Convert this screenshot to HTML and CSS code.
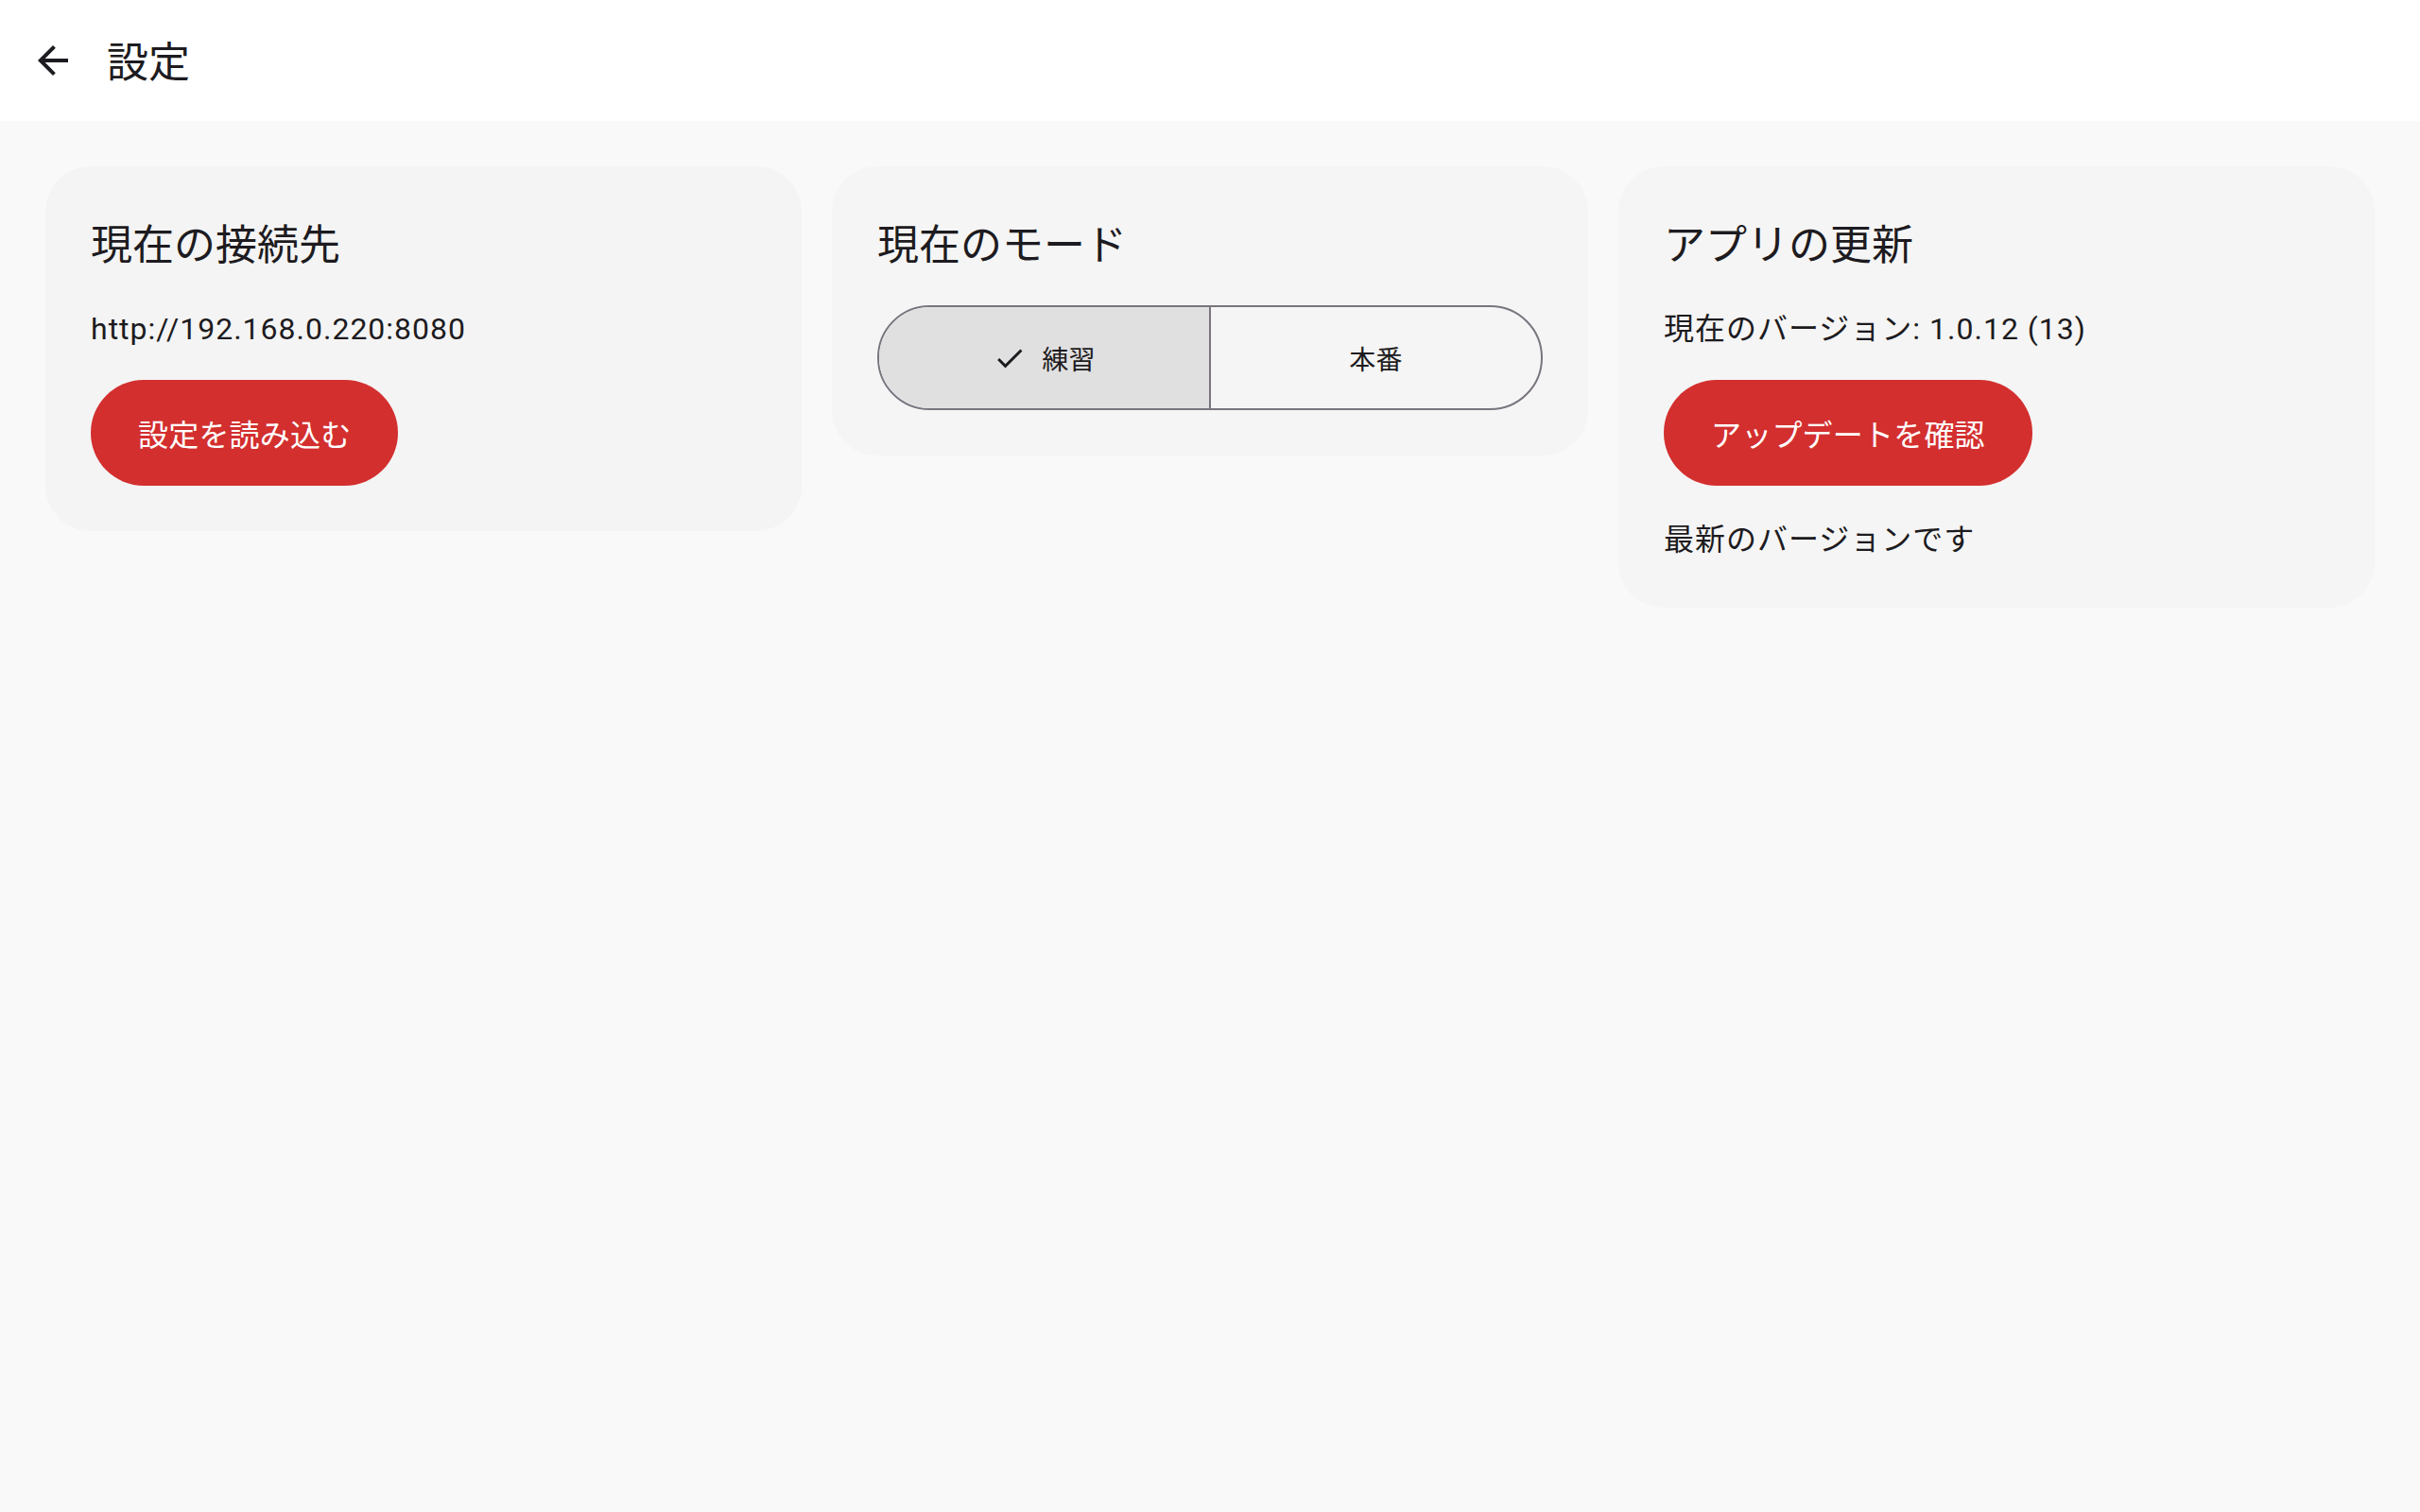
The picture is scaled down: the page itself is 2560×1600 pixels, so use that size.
FILE: index.html
```html
<!DOCTYPE html>
<html lang="ja">
<head>
<meta charset="utf-8">
<title>設定</title>
<link rel="stylesheet" href="styles.css">
</head>
<body>
<header class="appbar">
  <button class="back" aria-label="戻る">
    <svg viewBox="0 0 24 24" width="48" height="48"><path d="M20 11H7.83l5.59-5.59L12 4l-8 8 8 8 1.41-1.41L7.83 13H20v-2z" fill="#1d1b20"/></svg>
  </button>
  <h1 class="appbar-title">設定</h1>
</header>
<main class="content">
  <section class="card card-dark">
    <h2 class="card-title">現在の接続先</h2>
    <p class="body-text">http://192.168.0.220:8080</p>
    <button class="btn">設定を読み込む</button>
  </section>
  <section class="card">
    <h2 class="card-title">現在のモード</h2>
    <div class="segmented">
      <div class="segment selected">
        <svg class="check" viewBox="0 0 24 24" width="36" height="36"><path d="M9 16.17L4.83 12l-1.42 1.41L9 19 21 7l-1.41-1.41z" fill="#1d1b20"/></svg>
        <span>練習</span>
      </div>
      <div class="segment"><span>本番</span></div>
    </div>
  </section>
  <section class="card">
    <h2 class="card-title">アプリの更新</h2>
    <p class="body-text">現在のバージョン: 1.0.12 (13)</p>
    <button class="btn">アップデートを確認</button>
    <p class="body-text status">最新のバージョンです</p>
  </section>
</main>
</body>
</html>
```

FILE: styles.css
```css
html, body {
  margin: 0;
  padding: 0;
}
body {
  background: #f9f9f9;
  font-family: Roboto, "Noto Sans CJK JP", sans-serif;
  color: #1d1b20;
  width: 2560px;
  height: 1600px;
}
.appbar {
  height: 128px;
  background: #ffffff;
  display: flex;
  align-items: center;
}
.back {
  width: 48px;
  height: 48px;
  margin-left: 32px;
  padding: 0;
  border: none;
  background: transparent;
  display: flex;
  align-items: center;
  justify-content: center;
}
.back svg {
  display: block;
}
.appbar-title {
  margin: 0 0 0 33px;
  padding-top: 6px;
  font-size: 44px;
  font-weight: 400;
  line-height: 56px;
}
.content {
  display: grid;
  grid-template-columns: repeat(3, 1fr);
  gap: 32px;
  padding: 48px;
  align-items: start;
}
.card {
  background: #f5f5f5;
  border-radius: 48px;
  padding: 48px;
  display: flex;
  flex-direction: column;
  align-items: flex-start;
}
.card-dark {
  background: #f4f4f4;
}
.card-title {
  margin: 8px 0 35px;
  font-size: 44px;
  font-weight: 400;
  line-height: 56px;
}
.body-text {
  margin: 0;
  padding-top: 1px;
  font-size: 32px;
  line-height: 48px;
  letter-spacing: 1px;
}
.btn {
  margin-top: 30px;
  height: 112px;
  padding: 0 50px;
  border: none;
  border-radius: 56px;
  background: #d32f2f;
  color: #ffffff;
  font-family: Roboto, "Noto Sans CJK JP", sans-serif;
  font-size: 32px;
  letter-spacing: 0.2px;
}
.status {
  margin-top: 32px;
}
.segmented {
  align-self: stretch;
  display: flex;
  height: 111px;
  box-sizing: border-box;
  border: 2px solid #79747e;
  border-radius: 56px;
  overflow: hidden;
}
.segment {
  flex: 1;
  display: flex;
  align-items: center;
  justify-content: center;
  gap: 16px;
  font-size: 28px;
  letter-spacing: 0.2px;
}
.segment + .segment {
  border-left: 2px solid #79747e;
}
.segment.selected {
  background: #e0e0e0;
}
.check {
  display: block;
}
```
